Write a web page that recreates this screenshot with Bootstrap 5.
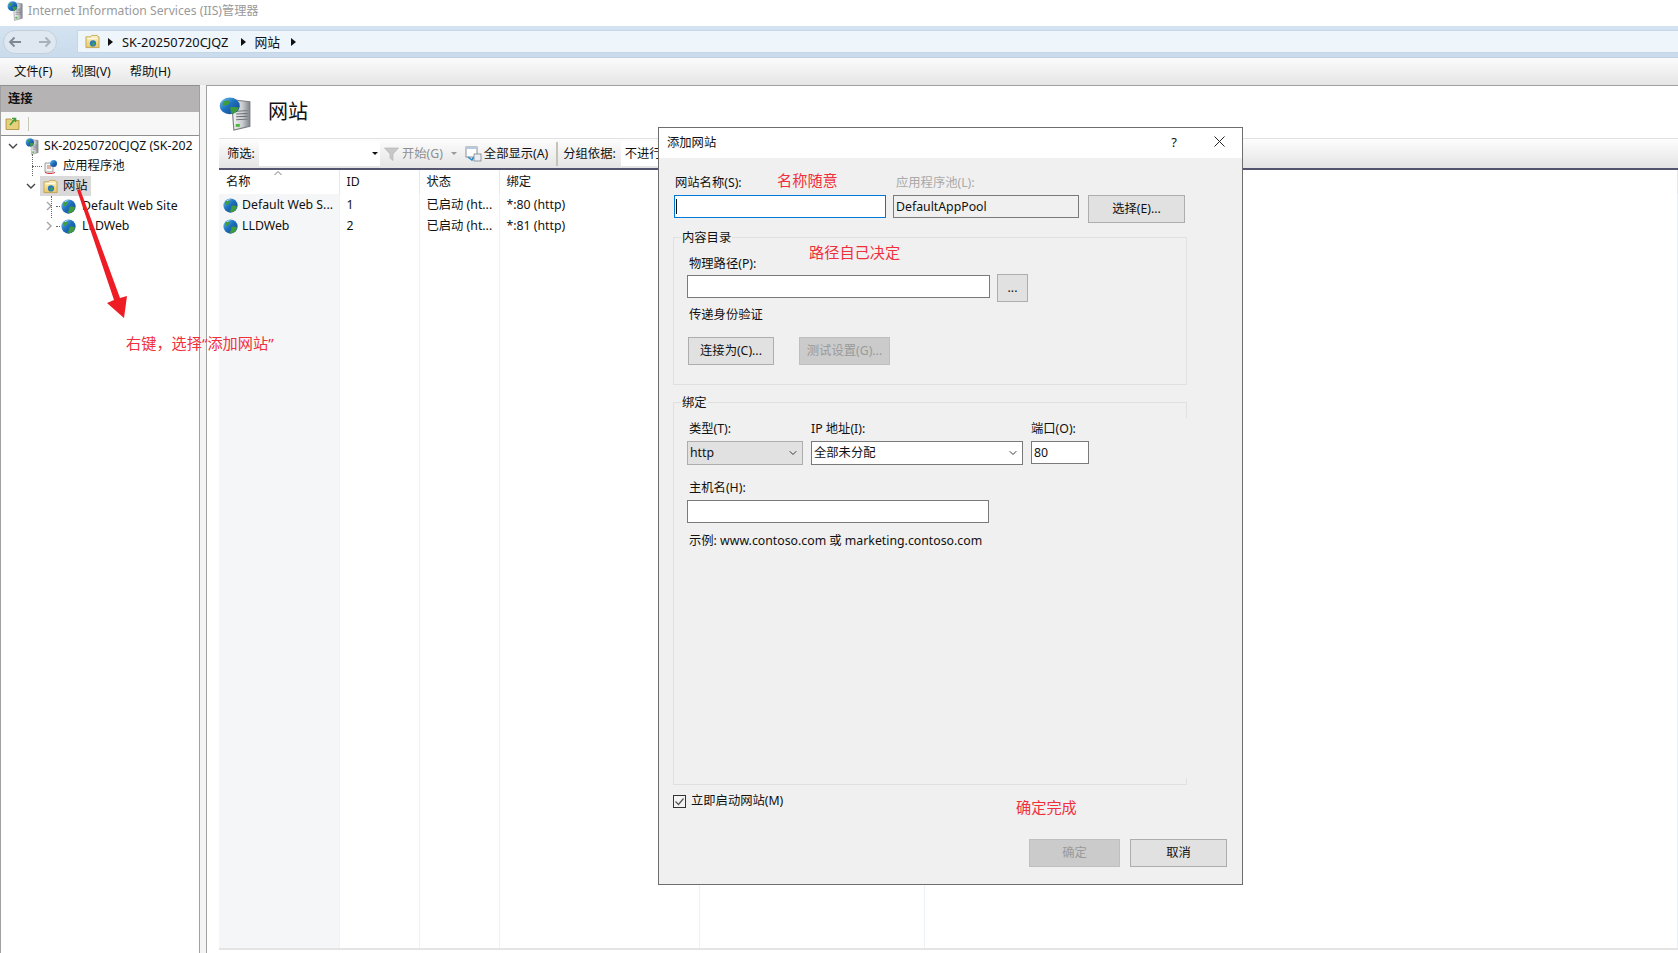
<!DOCTYPE html>
<html lang="zh-CN">
<head>
<meta charset="utf-8">
<title>Internet Information Services (IIS)管理器</title>
<link rel="stylesheet" href="https://cdn.jsdelivr.net/npm/bootstrap@5.3.0/dist/css/bootstrap.min.css">
<style>
html,body{height:100%;overflow:hidden}
body{background:#fff;color:#111;font:12.3px/16px "Noto Sans","Noto Sans CJK SC",sans-serif}
.app-shell{height:953px;position:relative;overflow:hidden}
.ttl-bar{height:26px;padding:0 0 5px 7px;color:#9a9a9a;font-size:12.2px}
.ttl-bar svg{margin-right:5px}
.addr-bar{height:32px;background:linear-gradient(#d4e3f1,#c9dbec);padding:4px 0 4px 3px;border-bottom:1px solid #bcd0e2}
.nav-pill{width:54px;height:24px;background:#dfe8f1;border:1px solid #c4cfda;border-radius:12px;padding:0 4px;color:#8f9aa5;font-size:15px}
.addr-box{height:23px;margin-left:20px;background:#eef5fb;border:1px solid #c5d6e6;border-right:0;padding-left:7px;font-size:12.8px}
.crumb-tri{width:0;height:0;border-left:5px solid #111;border-top:4px solid transparent;border-bottom:4px solid transparent}
.menu-strip{height:27px;background:linear-gradient(#fbfbfb,#e6e6e6);padding-left:14px;gap:19px}
.work-row{height:868px}
.conn-pane{width:200px;border:1px solid #a0a0a0;border-bottom:0;border-top-color:#8f8f8f;background:#fff;position:relative}
.conn-head{height:26px;background:#b5b3b4;padding-left:7px;font-weight:700;color:#111}
.conn-tools{height:24px;background:#f7f7f7;border-bottom:1px solid #8e8e8e;padding-left:4px}
.tool-sep{width:1px;height:14px;background:#c9c9b8;margin-left:8px}
.tree-box{padding-top:0;position:relative}
.tree-row{height:20px;white-space:nowrap;overflow:hidden}
.lvl0{padding-left:7px}.lvl1{padding-left:24px}.lvl2{padding-left:44px}
.tree-row svg{flex:none}
.pick-item{display:flex;align-items:center;background:#d9d9d9;height:20px;padding:0 3px 0 3px;margin-left:1px}
.twist{width:10px;flex:none;margin-right:3px}
.stub{width:4px;border-top:1px dotted #666;flex:none;margin-right:1px}
.dot-v{position:absolute;width:0;border-left:1px dotted #666}
.gap-pane{width:6px;background:#f4f4f4}
.main-pane{flex:1;min-width:0;background:#fff;border-left:1px solid #a0a0a0;border-top:1px solid #a0a0a0}
.page-head{height:52px;padding:11px 0 0 12px}
.page-name{font-size:20px;line-height:28px;margin:1px 0 0 17px;color:#111}
.filter-strip{height:32px;margin-left:12px;border-top:1px solid #e1e1e1;border-bottom:2px solid #54546e;background:linear-gradient(#fdfdfd,#e5e4e5);padding-left:8px;white-space:nowrap}
.filter-box{width:121px;height:25px;background:#fff;margin-left:4px;position:relative;flex:none}
.tiny-tri{position:absolute;right:2px;top:11px;border-left:3px solid transparent;border-right:3px solid transparent;border-top:3px solid #111}
.off-text{color:#8f8f8f}
.list-wrap{height:780px;margin-left:12px;border-bottom:2px solid #e4e4e4;position:relative}
.list-view{table-layout:fixed;width:1459px;height:778px;margin:0;border-collapse:collapse;--bs-table-bg:transparent}
.list-view th,.list-view td{padding:0 0 0 5px;border:0;border-right:1px solid #edf2f9;font-weight:400;font-size:12.3px;white-space:nowrap;overflow:hidden;color:#111;box-shadow:none;vertical-align:middle}
.list-view thead tr{height:24px}
.list-view th{border-right-color:#e8e8e8}
.list-view tbody tr.dat{height:21px}
.list-view td:first-child{background:#f5f6f7}
.list-view th:first-child{position:relative;padding-left:7px}
.sort-mark{position:absolute;left:55px;top:0;width:8px;height:6px}
.list-view th:nth-child(n+2),.list-view td:nth-child(n+2){padding-left:7px}
.dlg-win{position:absolute;left:658px;top:127px;width:585px;height:758px;background:#f0f0f0;border:1px solid #6e6e6e;z-index:5}
.dlg-top{height:30px;background:#fff;padding:0 17px 0 8px}
.dlg-body{padding:17px 15px 0 15px}
.fld-text{display:block;height:16px;margin:0;white-space:nowrap}
.muted-lab{color:#a9a9a9}
.form-control.win-inp,.form-select.win-inp{border-radius:0;border:1px solid #7a7a7a;min-height:0;height:23px;font-size:12.3px;line-height:16px;padding:0 2px;background-color:#fff;box-shadow:none;color:#111}
.form-control.win-act{border-color:#0078d7}
.form-control.win-ro{background-color:#f0f0f0}
.form-select.win-inp{background-position:right 4px center;background-size:10px 8px;padding:0 16px 0 2px;height:24px}
.form-select.win-gray{background-color:#e1e1e1;border-color:#adadad}
.text-cursor{position:absolute;left:2px;top:4px;width:1px;height:15px;background:#111}
.btn.win-btn{border-radius:0;background:#e1e1e1;border:1px solid #adadad;color:#111;font-size:12.3px;line-height:16px;padding:0;height:28px;white-space:nowrap}
.btn.win-btn:disabled{background:#cbcbcb;border-color:#bfbfbf;color:#9a9a9a;opacity:1}
.grp-box{border:1px solid #e0e0e0;position:relative;margin-left:-1px;width:514px}
.grp-title{position:absolute;left:7px;top:-8px;background:#f0f0f0;padding:0 1px;height:16px}
.grp-one{height:148px;margin-top:14px;padding:18px 0 0 13px}
.grp-two{height:383px;margin-top:17px;padding:18px 0 0 13px;border-right-color:transparent}
.grp-two::before,.grp-two::after{content:"";position:absolute;right:-1px;width:1px;height:16px;background:#e0e0e0}
.grp-two::before{top:-1px}.grp-two::after{bottom:-1px;height:7px}
.ind-lab{padding-left:2px}
.form-check-input.win-chk{width:13px;height:13px;margin:0 5px 0 -1px;border-radius:0;border:1px solid #333;background-color:#f4f4f4;flex:none;box-shadow:none;background-image:url("data:image/svg+xml,%3Csvg xmlns='http://www.w3.org/2000/svg' viewBox='0 0 13 13'%3E%3Cpath d='M2.500 6.500l3 3 5-6' fill='none' stroke='%23555' stroke-width='1.200'/%3E%3C/svg%3E");background-size:13px 13px}
.note-red{position:absolute;color:#f0303c;font-size:15.200px;line-height:20px;white-space:nowrap;z-index:6}
.arrow-over{position:absolute;left:0;top:0;width:200px;height:340px;z-index:4;pointer-events:none}
.note-a{left:126px;top:333px}.note-b{left:777px;top:170px}.note-c{left:809px;top:242px}.note-d{left:1016px;top:797px}
</style>
</head>
<body>
<svg width="0" height="0" class="position-absolute">
<defs>
<linearGradient id="gb" x1="0" y1="0" x2="1" y2="1"><stop offset="0" stop-color="#7cc8f2"/><stop offset=".45" stop-color="#1f72bf"/><stop offset="1" stop-color="#123f8a"/></linearGradient>
<linearGradient id="gs" x1="0" y1="0" x2="1" y2="0"><stop offset="0" stop-color="#fafafa"/><stop offset=".6" stop-color="#c9cbce"/><stop offset="1" stop-color="#80848a"/></linearGradient>
<linearGradient id="gf" x1="0" y1="0" x2="0" y2="1"><stop offset="0" stop-color="#fdf3c0"/><stop offset="1" stop-color="#e8c766"/></linearGradient>
<symbol id="globe" viewBox="0 0 16 16"><circle cx="8" cy="8" r="7.600" fill="url(#gb)"/><path d="M3 3.500c2-1 3.500-.8 4.300.2.300 1-1.300 1.300-1.500 2.500-.2 1.400-2 1.500-2.800.6C2 6 2.300 4.600 3 3.500zM9.500 8.500c1.500-.6 3.500-.5 5.300.3.100 2.400-1.600 4.700-3.300 5.500-1.500.7-3 .7-4.500.2.200-1.300 1.300-1.800 1.600-2.800.3-1.300-.1-2.500.9-3.200z" fill="#3f9c3c"/><path d="M4 2.800A6.800 6.800 0 0 1 9 1.400C7 1.500 5.500 2.500 4.800 3.500z" fill="#e2f4fd"/></symbol>
<symbol id="folderglobe" viewBox="0 0 16 16"><path d="M1 3h5l1-1.500h6l1 1.500h1v11.500H1z" fill="url(#gf)" stroke="#b9973f" stroke-width=".8"/><path d="M3 5h10" stroke="#fff" stroke-width="1"/><circle cx="8.500" cy="10" r="3.300" fill="#2a78bd"/><path d="M7 8.500c1-.7 2-.3 2 .5s-1.500 1-1.500 2.200c0 .5.800 1.300 1.300 1 1-.5 1.800-1.500 2-2.500-1.500-.5-2-1-3.800-1.200z" fill="#46aa42"/></symbol>
<symbol id="server" viewBox="0 0 14 18"><path d="M5.500 1.500l8 1v13l-7 2z" fill="url(#gs)" stroke="#7b7f84" stroke-width=".5"/><path d="M7.500 7.500l5-.3M7.500 9l5-.3M7.500 10.500l5-.3M7.500 12l5-.3" stroke="#6a6e73" stroke-width=".5"/><rect x="7.300" y="14.300" width="1.800" height="1.500" fill="#4db83f"/><circle cx="4.700" cy="4.700" r="4.400" fill="url(#gb)"/><path d="M2.200 2.200c1.500-.8 2.500-.3 2.500.7S3.300 4.200 2.200 4.700C1.200 4.300 1.500 3 2.200 2.200zM4.800 5.500c1.300-.4 2.700-.3 3.900.1-.3 1.500-1.500 3-3 3.300-.8-.6-.4-2-.9-3.400z" fill="#3f9c3c"/></symbol>
</defs>
</svg>
<div class="app-shell d-flex flex-column">
  <div class="ttl-bar d-flex align-items-center"><svg width="16" height="20"><use href="#server"/></svg><span>Internet Information Services (IIS)管理器</span></div>
  <div class="addr-bar d-flex">
    <div class="nav-pill d-flex align-items-center justify-content-between"><svg width="14" height="12" viewBox="0 0 14 12"><path d="M13 6H2M6.500 1.500L2 6l4.500 4.500" fill="none" stroke="#7d8893" stroke-width="1.800"/></svg><svg width="14" height="12" viewBox="0 0 14 12"><path d="M1 6h11M7.500 1.500L12 6l-4.500 4.500" fill="none" stroke="#a6b1bc" stroke-width="1.800"/></svg></div>
    <div class="addr-box flex-grow-1 d-flex align-items-center"><svg width="15" height="15"><use href="#folderglobe"/></svg><i class="crumb-tri ms-2"></i><span style="margin-left:9px">SK-20250720CJQZ</span><i class="crumb-tri" style="margin-left:13px"></i><span style="margin-left:8px">网站</span><i class="crumb-tri" style="margin-left:11px"></i></div>
  </div>
  <div class="menu-strip d-flex align-items-center"><span>文件(F)</span><span>视图(V)</span><span>帮助(H)</span></div>
  <div class="work-row d-flex">
    <aside class="conn-pane">
      <div class="conn-head d-flex align-items-center">连接</div>
      <div class="conn-tools d-flex align-items-center"><svg width="15" height="15" viewBox="0 0 15 15"><path d="M1 3h5l1 1.500h7v9H1z" fill="#e8cf7c" stroke="#a88c3a" stroke-width=".8"/><path d="M5 9l5-6M7 2.500h3.500V6" fill="none" stroke="#3ea03a" stroke-width="1.600"/></svg><i class="tool-sep"></i></div>
      <div class="tree-box">
        <i class="dot-v" style="left:31px;top:18px;height:22px"></i>
        <i class="dot-v" style="left:50px;top:60px;height:22px"></i>
        <div class="tree-row lvl0 d-flex align-items-center"><svg class="twist" width="10" height="8" viewBox="0 0 10 8"><path d="M1 2l4 4 4-4" fill="none" stroke="#444" stroke-width="1.400"/></svg><svg width="14" height="17" class="ms-1"><use href="#server"/></svg><span style="margin-left:5px">SK-20250720CJQZ (SK-202</span></div>
        <div class="tree-row lvl1 d-flex align-items-center"><i class="stub" style="width:10px;margin-left:7px"></i><svg width="15" height="15" viewBox="0 0 15 15"><path d="M2 4h8v9H2z" fill="#f4f4f4" stroke="#888" stroke-width=".8"/><path d="M4 7h4M4 9h4" stroke="#c05030" stroke-width=".8"/><circle cx="10.500" cy="4.500" r="3.500" fill="url(#gb)"/><path d="M2 13.500c3 1.500 7 1.500 10 0" fill="none" stroke="#d33" stroke-width="1"/></svg><span style="margin-left:5px">应用程序池</span></div>
        <div class="tree-row lvl1 d-flex align-items-center"><svg class="twist" width="10" height="8" viewBox="0 0 10 8" style="margin-left:1px"><path d="M1 2l4 4 4-4" fill="none" stroke="#444" stroke-width="1.400"/></svg><span class="pick-item"><svg width="15" height="15"><use href="#folderglobe"/></svg><span style="margin-left:5px">网站</span></span></div>
        <div class="tree-row lvl2 d-flex align-items-center"><svg width="8" height="10" viewBox="0 0 8 10" style="margin-right:3px;flex:none"><path d="M2 1l4 4-4 4" fill="none" stroke="#a5a5a5" stroke-width="1.400"/></svg><i class="stub"></i><svg width="15" height="15"><use href="#globe"/></svg><span style="margin-left:6px">Default Web Site</span></div>
        <div class="tree-row lvl2 d-flex align-items-center"><svg width="8" height="10" viewBox="0 0 8 10" style="margin-right:3px;flex:none"><path d="M2 1l4 4-4 4" fill="none" stroke="#a5a5a5" stroke-width="1.400"/></svg><i class="stub"></i><svg width="15" height="15"><use href="#globe"/></svg><span style="margin-left:6px">LLDWeb</span></div>
      </div>
    </aside>
    <div class="gap-pane"></div>
    <main class="main-pane">
      <div class="page-head d-flex align-items-start"><svg width="32" height="34" viewBox="0 0 14 18" preserveAspectRatio="none"><use href="#server"/></svg><span class="page-name">网站</span></div>
      <div class="filter-strip d-flex align-items-center">
        <span>筛选:</span>
        <div class="filter-box"><i class="tiny-tri"></i></div>
        <svg class="ms-1" width="15" height="14" viewBox="0 0 15 14"><path d="M0.500 1h14L9 7v6.500L6 11V7z" fill="#c8c8c8" stroke="#b0b0b0" stroke-width=".6"/></svg>
        <span class="off-text" style="margin-left:3px">开始(G)</span>
        <span class="position-relative" style="width:6px;height:4px;margin:0 8px 0 8px"><i class="tiny-tri" style="top:0;right:0;border-top-color:#999"></i></span>
        <svg width="17" height="16" viewBox="0 0 17 16"><rect x="1" y="1" width="11" height="10" fill="#fff" stroke="#8a8f96"/><rect x="1" y="1" width="11" height="2" fill="#b7c9dd"/><path d="M3 11l4 3 1-2h7" fill="none" stroke="#2c8ac7" stroke-width="1.500"/><rect x="9" y="8" width="7" height="7" fill="#eaeef2" stroke="#7d8690" stroke-width=".8"/></svg>
        <span style="margin-left:2px">全部显示(A)</span>
        <i style="width:2px;height:24px;background:#c4c4b4;margin:0 5px 0 8px"></i>
        <span>分组依据:</span>
        <div style="width:60px;height:25px;background:#fff;margin-left:5px;padding:5px 0 0 4px;flex:none">不进行</div>
      </div>
      <div class="list-wrap">
        <table class="table list-view">
          <colgroup><col style="width:120px"><col style="width:80px"><col style="width:80px"><col style="width:200px"><col style="width:225px"><col></colgroup>
          <thead><tr><th>名称<svg class="sort-mark" viewBox="0 0 8 6"><path d="M.5 5L4 1.500 7.500 5" fill="none" stroke="#777"/></svg></th><th>ID</th><th>状态</th><th>绑定</th><th></th><th></th></tr></thead>
          <tbody>
            <tr class="dat"><td class="text-truncate"><svg width="15" height="15" class="me-1 align-text-bottom" style="margin-left:-1px"><use href="#globe"/></svg>Default Web S...</td><td>1</td><td>已启动 (ht...</td><td>*:80 (http)</td><td></td><td></td></tr>
            <tr class="dat"><td><svg width="15" height="15" class="me-1 align-text-bottom" style="margin-left:-1px"><use href="#globe"/></svg>LLDWeb</td><td>2</td><td>已启动 (ht...</td><td>*:81 (http)</td><td></td><td></td></tr>
            <tr><td></td><td></td><td></td><td></td><td></td><td></td></tr>
          </tbody>
        </table>
      </div>
    </main>
  </div>

  <svg class="arrow-over" viewBox="0 0 200 340"><polygon points="77,190 80,189 120,298 127,296 124,318 107,303 114,300" fill="#ee1c25"/></svg>
  <div class="note-red note-a">右键，选择“添加网站”</div>

  <div class="dlg-win d-flex flex-column" role="dialog">
    <div class="dlg-top d-flex align-items-center justify-content-between"><span>添加网站</span><span class="d-flex align-items-center" style="gap:37px"><span style="font-size:13px;margin-top:-2px">?</span><svg width="11" height="11" viewBox="0 0 11 11" style="margin-top:-3px"><path d="M.5.500l10 10M10.500.500l-10 10" stroke="#222" fill="none"/></svg></span></div>
    <div class="dlg-body flex-grow-1 d-flex flex-column">
      <div class="d-flex align-items-start">
        <div style="width:212px"><label class="fld-text ind-lab" style="margin-bottom:4px;padding-left:1px">网站名称(S):</label><div class="position-relative"><input class="form-control win-inp win-act" type="text"><i class="text-cursor"></i></div></div>
        <div style="width:186px;margin-left:7px"><label class="fld-text muted-lab ind-lab" style="margin-bottom:4px;padding-left:3px">应用程序池(L):</label><input class="form-control win-inp win-ro" type="text" value="DefaultAppPool" readonly></div>
        <button class="btn win-btn" type="button" style="width:97px;margin:20px 0 0 9px">选择(E)...</button>
      </div>
      <div class="grp-box grp-one">
        <span class="grp-title">内容目录</span>
        <label class="fld-text ind-lab" style="margin-bottom:2px">物理路径(P):</label>
        <div class="d-flex align-items-start" style="margin-bottom:5px"><input class="form-control win-inp" type="text" style="width:303px;margin-top:1px"><button class="btn win-btn" type="button" style="width:31px;margin-left:7px">...</button></div>
        <div class="fld-text ind-lab">传递身份验证</div>
        <div class="d-flex" style="margin-top:14px;margin-left:1px"><button class="btn win-btn" type="button" style="width:86px">连接为(C)...</button><button class="btn win-btn" type="button" style="width:91px;margin-left:25px" disabled>测试设置(G)...</button></div>
      </div>
      <div class="grp-box grp-two">
        <span class="grp-title">绑定</span>
        <div class="d-flex">
          <div style="width:116px"><label class="fld-text ind-lab" style="margin-bottom:4px">类型(T):</label><select class="form-select win-inp win-gray"><option>http</option></select></div>
          <div style="width:212px;margin-left:8px"><label class="fld-text" style="margin:0 0 4px">IP 地址(I):</label><select class="form-select win-inp"><option>全部未分配</option></select></div>
          <div style="width:58px;margin-left:8px"><label class="fld-text" style="margin:0 0 4px">端口(O):</label><input class="form-control win-inp" type="text" value="80"></div>
        </div>
        <label class="fld-text ind-lab" style="margin:15px 0 4px">主机名(H):</label>
        <input class="form-control win-inp" type="text" style="width:302px">
        <div class="fld-text ind-lab" style="margin-top:10px">示例: www.contoso.com 或 marketing.contoso.com</div>
      </div>
      <div class="d-flex align-items-center" style="margin-top:8px;height:16px"><input class="form-check-input win-chk" type="checkbox" checked><label>立即启动网站(M)</label></div>
      <div class="d-flex justify-content-end" style="margin-top:30px;gap:10px"><button class="btn win-btn" type="button" style="width:91px" disabled>确定</button><button class="btn win-btn" type="button" style="width:97px">取消</button></div>
    </div>
  </div>
  <div class="note-red note-b">名称随意</div>
  <div class="note-red note-c">路径自己决定</div>
  <div class="note-red note-d">确定完成</div>
</div>
<script src="https://cdn.jsdelivr.net/npm/bootstrap@5.3.0/dist/js/bootstrap.bundle.min.js"></script>
</body>
</html>
